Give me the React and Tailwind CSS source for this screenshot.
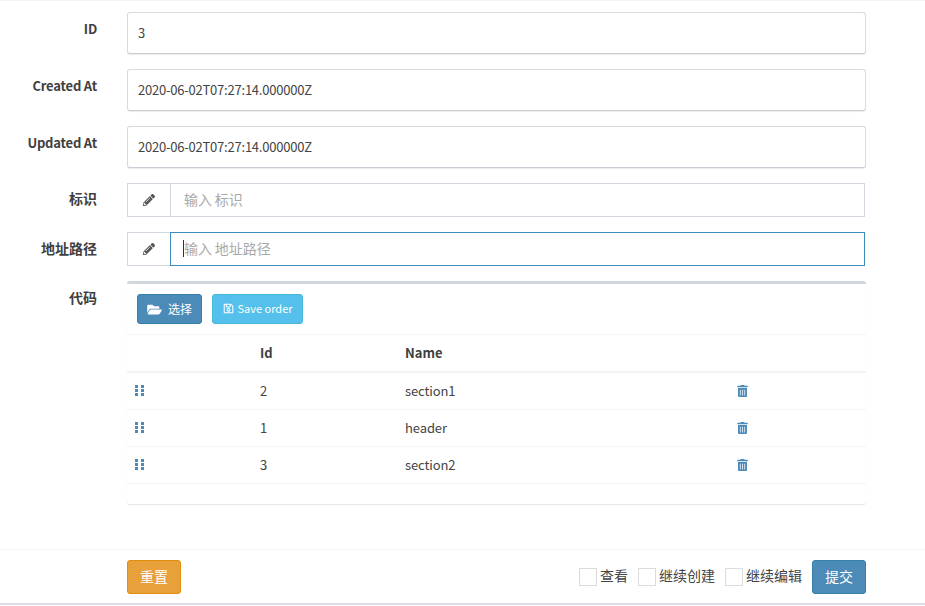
import React from "react";
import { FaPencilAlt, FaFolderOpen, FaRegSave, FaTrashAlt } from "react-icons/fa";

const font = "font-['Noto_Sans_CJK_SC',sans-serif]";

function Grip() {
  return (
    <svg width="9" height="11" viewBox="0 0 9 11" fill="#4c8ab8" className="mb-[1px]">
      <rect x="0" y="0" width="3" height="3" />
      <rect x="6" y="0" width="3" height="3" />
      <rect x="0" y="4" width="3" height="3" />
      <rect x="6" y="4" width="3" height="3" />
      <rect x="0" y="8" width="3" height="3" />
      <rect x="6" y="8" width="3" height="3" />
    </svg>
  );
}

function ReadonlyRow({ label, value }) {
  return (
    <div className="flex h-[57px]">
      <div className="w-[97px] pt-[7px] text-right text-[13px] leading-[20px] font-bold tracking-[-0.2px] text-[#3f3f3f]">{label}</div>
      <div className="ml-[30px] h-[42px] w-[739px] rounded-[3px] border border-[#d8dae0] border-b-[#c9ccd3] shadow-[0_1px_1px_rgba(0,0,0,0.08)] bg-white pl-[10px] pt-[10px] text-[13px] leading-[20px] tracking-[-0.22px] text-[#444]">
        {value}
      </div>
    </div>
  );
}

function InputRow({ label, placeholder, focused }) {
  return (
    <div className="flex h-[49px]">
      <div className={"w-[97px] text-right text-[14px] leading-[20px] font-bold text-[#3f3f3f] " + (focused ? "pt-[6px]" : "pt-[5px]")}>{label}</div>
      <div className="ml-[30px] flex h-[34px] w-[738px]">
        <div className="flex w-[43px] items-center justify-center border border-r-0 border-[#d2d6de] text-[#555]">
          <FaPencilAlt className="h-[12px] w-[12px]" />
        </div>
        <div className={"flex flex-1 items-center border pb-[2px] pl-[13px] text-[14px] [word-spacing:-0.5px] text-[#a9a9a9] " + (focused ? "border-[#3c8dbc]" : "border-[#d2d6de]")}>
          {focused && <span className="ml-[-1px] h-[17px] w-px bg-[#333]" />}
          {placeholder}
        </div>
      </div>
    </div>
  );
}

function TableRow({ id, name }) {
  return (
    <div className="flex h-[37px] items-center border-b border-[#f4f4f4] text-[13px] tracking-[-0.1px] text-[#444]">
      <div className="w-[133px] pl-[8px]">
        <Grip />
      </div>
      <div className="w-[145px]">{id}</div>
      <div className="w-[332px]">{name}</div>
      <FaTrashAlt className="h-[12px] w-[11px] text-[#4c8ab8]" />
    </div>
  );
}

function Check({ label }) {
  return (
    <>
      <span className="mt-[8px] h-[18px] w-[18px] border border-[#dcdcdc]" />
      <span className="mt-[5px] ml-[3px] mr-[10px] leading-[20px]">{label}</span>
    </>
  );
}

export default function App() {
  return (
    <div className={"relative h-[606px] w-[925px] overflow-hidden bg-white " + font}>
      <div className="h-[605px] border-b-2 border-[#d9dce3]">
        <div className="border-t border-[#f4f4f4] pt-[11px]">
          <ReadonlyRow label="ID" value="3" />
          <ReadonlyRow label="Created At" value="2020-06-02T07:27:14.000000Z" />
          <ReadonlyRow label="Updated At" value="2020-06-02T07:27:14.000000Z" />
          <InputRow label="标识" placeholder="输入 标识" />
          <InputRow label="地址路径" placeholder="输入 地址路径" focused />

          <div className="flex">
            <div className="w-[97px] pt-[6px] text-right text-[14px] leading-[20px] font-bold text-[#3f3f3f]">代码</div>
            <div className="ml-[30px] h-[223px] w-[739px] rounded-[3px] border-t-[3px] border-[#d2d6de] shadow-[0_1px_1px_rgba(0,0,0,0.1)]">
              <div className="flex h-[51px] gap-[10px] border-b border-[#f4f4f4] pl-[10px] pt-[10px]">
                <button className="flex h-[30px] w-[65px] items-center justify-center gap-[6px] rounded-[3px] border border-[#367fa9] bg-[#4c8ab8] text-[12px] text-white">
                  <FaFolderOpen className="h-[13px] w-[15px]" />选择
                </button>
                <button className="flex h-[30px] w-[91px] items-center justify-center gap-[4px] rounded-[3px] border border-[#46b8da] bg-[#54c0eb] pb-[1px] text-[11px] text-white">
                  <FaRegSave className="h-[11px] w-[11px]" />Save order
                </button>
              </div>
              <div className="flex h-[38px] items-center border-b-2 border-[#f4f4f4] text-[13px] font-bold text-[#3f3f3f]">
                <div className="w-[133px]" />
                <div className="w-[145px]">Id</div>
                <div>Name</div>
              </div>
              <TableRow id="2" name="section1" />
              <TableRow id="1" name="header" />
              <TableRow id="3" name="section2" />
            </div>
          </div>

          <div className="mt-[45px] flex h-[55px] items-start border-t border-[#f4f4f4] pt-[10px]">
            <div className="ml-[127px] flex h-[34px] w-[54px] items-center justify-center rounded-[3px] border border-[#e08e0b] bg-[#e8a03a] pb-[2px] text-[14px] text-white">重置</div>
            <div className="ml-auto mr-[59px] flex items-start text-[14px] text-[#444]">
              <Check label="查看" />
              <Check label="继续创建" />
              <Check label="继续编辑" />
              <div className="flex h-[34px] w-[54px] items-center justify-center rounded-[3px] border border-[#367fa9] bg-[#4c8ab8] pb-[2px] text-white">提交</div>
            </div>
          </div>
        </div>
      </div>
    </div>
  );
}
